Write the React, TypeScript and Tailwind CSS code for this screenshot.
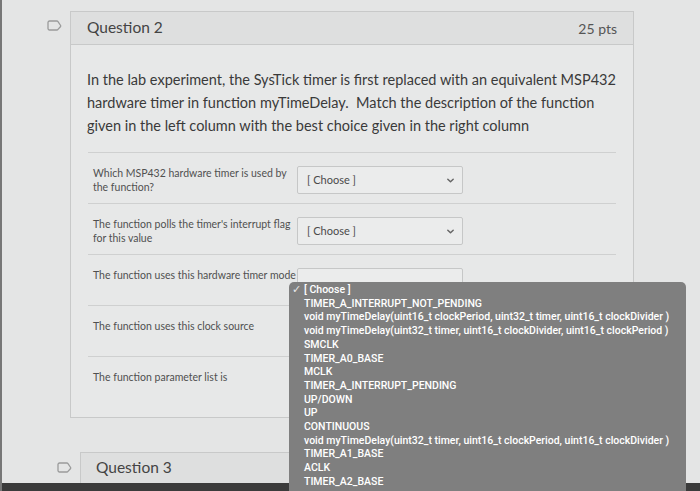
import React from 'react';

const rows = [
  { label: 'Which MSP432 hardware timer is used by the function?', select: 'closed' },
  { label: "The function polls the timer's interrupt flag for this value", select: 'closed' },
  { label: 'The function uses this hardware timer mode', select: 'open' },
  { label: 'The function uses this clock source', select: 'none' },
  { label: 'The function parameter list is', select: 'none' },
];

const options = [
  'TIMER_A_INTERRUPT_NOT_PENDING',
  'void myTimeDelay(uint16_t clockPeriod, uint32_t timer, uint16_t clockDivider )',
  'void myTimeDelay(uint32_t timer, uint16_t clockDivider, uint16_t clockPeriod )',
  'SMCLK',
  'TIMER_A0_BASE',
  'MCLK',
  'TIMER_A_INTERRUPT_PENDING',
  'UP/DOWN',
  'UP',
  'CONTINUOUS',
  'void myTimeDelay(uint32_t timer, uint16_t clockPeriod, uint16_t clockDivider )',
  'TIMER_A1_BASE',
  'ACLK',
  'TIMER_A2_BASE',
];

function FlagIcon() {
  return (
    <svg width="15" height="13" viewBox="0 0 15 13" fill="none">
      <path
        d="M2.5 1h7.3c.5 0 .9.2 1.2.6l2.6 3.9c.2.3.2.7 0 1L11 9.4c-.3.4-.7.6-1.2.6H2.5c-.8 0-1.5-.7-1.5-1.5v-6C1 1.7 1.7 1 2.5 1z"
        stroke="#9a9b9b"
        strokeWidth="1.3"
      />
    </svg>
  );
}

function Select({ open }: { open?: boolean }) {
  return (
    <div className="flex h-[28px] w-[166px] items-center justify-between rounded-[2px] border border-[#c6c7c7] bg-[#ebecec] pl-[9px] pr-[7px] text-[11px] text-[#4a4a4a]">
      {open ? null : (
        <>
          <span>[ Choose ]</span>
          <svg width="9" height="9" viewBox="0 0 10 10" fill="none">
            <path d="M2 3.5l3 3 3-3" stroke="#666" strokeWidth="1.6" strokeLinecap="round" strokeLinejoin="round" />
          </svg>
        </>
      )}
    </div>
  );
}

export default function App() {
  return (
    <div className="relative flex h-[491px] w-[700px] flex-col overflow-hidden border-l-2 border-[#777] bg-[#e4e5e5] font-['Lato','Noto_Sans',sans-serif]">
      {/* Question 2 */}
      <div className="flex items-start pl-[45px] pt-[11px]">
        <div className="mt-[9px] mr-[8px]">
          <FlagIcon />
        </div>
        <div className="w-[564px]">
          <div className="flex h-[34px] items-center justify-between border border-[#c8c9c9] bg-[#dedfdf] px-[16px]">
            <span className="text-[15.5px] text-[#444]">Question 2</span>
            <span className="text-[14px] text-[#555]">25 pts</span>
          </div>
          <div className="border-x border-b border-[#c8c9c9] bg-[#e7e8e8] pb-[10px]">
            <p className="px-[16px] pt-[23px] text-[14.5px] leading-[23px] text-[#3a3a3a]">
              In the lab experiment, the SysTick timer is first replaced with an equivalent MSP432
              hardware timer in function myTimeDelay.&nbsp; Match the description of the function
              given in the left column with the best choice given in the right column
            </p>
            <div className="mx-[17px] mt-[15px]">
              {rows.map((r) => (
                <div key={r.label} className="flex h-[51px] items-start border-t border-[#cfd0d0] pl-[5px] pt-[13px]">
                  <div
                    className={
                      r.select === 'open'
                        ? 'w-[204px] whitespace-nowrap text-[10.5px] leading-[14px] text-[#505050]'
                        : 'w-[204px] text-[10.5px] leading-[14px] text-[#505050]'
                    }
                  >
                    {r.label}
                  </div>
                  {r.select === 'closed' ? <Select /> : null}
                  {r.select === 'open' ? <Select open /> : null}
                </div>
              ))}
            </div>
          </div>
        </div>
      </div>

      {/* Question 3 */}
      <div className="mt-[34px] flex items-start pl-[55px]">
        <div className="mt-[10px] mr-[8px]">
          <FlagIcon />
        </div>
        <div className="flex h-[31px] w-[600px] items-center border-l border-t border-[#c8c9c9] bg-[#dedfdf] px-[15px]">
          <span className="text-[15.5px] text-[#444]">Question 3</span>
        </div>
      </div>
      <div className="mt-auto h-[8px] w-full bg-[#3b3b3b]" />

      {/* open select menu */}
      <div className="absolute left-[287px] top-[282px] w-[397px] rounded-t-[5px] bg-[#7f7f7f] pt-[1px] pb-[4px] font-['Roboto','Liberation_Sans',sans-serif] text-[10.5px] font-medium leading-[13.7px] text-white">
        <div className="flex">
          <span className="w-[15px] pl-[3px] text-[#e8e8e8]">✓</span>
          <span>[ Choose ]</span>
        </div>
        {options.map((o, i) => (
          <div key={i} className="pl-[15px]">
            {o}
          </div>
        ))}
      </div>
    </div>
  );
}
